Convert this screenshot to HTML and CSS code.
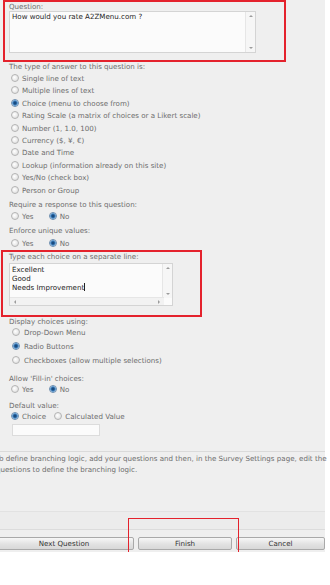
FILE: index.html
```html
<!DOCTYPE html>
<html lang="en">
<head>
  <meta charset="UTF-8" />
  <meta name="viewport" content="width=device-width, initial-scale=1.0">
  <title>New Question</title>
  <link rel="stylesheet" href="styles.css">
</head>
<body>

  <!-- Formulário da pergunta -->
  <div class="form-area">

    <div class="highlight question-box">
      <div class="label">Question:</div>
      <div class="textbox question-text">
        <div class="textbox-content">How would you rate A2ZMenu.com ?</div>
        <div class="vscroll">
          <span class="arrow up"></span>
          <span class="arrow down"></span>
        </div>
      </div>
    </div>

    <div class="label">The type of answer to this question is:</div>
    <div class="option-list type-list">
      <div class="option"><span class="radio"></span>Single line of text</div>
      <div class="option"><span class="radio"></span>Multiple lines of text</div>
      <div class="option"><span class="radio checked"></span>Choice (menu to choose from)</div>
      <div class="option"><span class="radio"></span>Rating Scale (a matrix of choices or a Likert scale)</div>
      <div class="option"><span class="radio"></span>Number (1, 1.0, 100)</div>
      <div class="option"><span class="radio"></span>Currency ($, ¥, €)</div>
      <div class="option"><span class="radio"></span>Date and Time</div>
      <div class="option"><span class="radio"></span>Lookup (information already on this site)</div>
      <div class="option"><span class="radio"></span>Yes/No (check box)</div>
      <div class="option"><span class="radio"></span>Person or Group</div>
    </div>

    <div class="label spaced-3">Require a response to this question:</div>
    <div class="inline-options spaced-1">
      <span class="radio"></span><span class="yes">Yes</span>
      <span class="radio checked"></span><span>No</span>
    </div>

    <div class="label spaced-3">Enforce unique values:</div>
    <div class="inline-options spaced-2">
      <span class="radio"></span><span class="yes">Yes</span>
      <span class="radio checked"></span><span>No</span>
    </div>

    <div class="highlight choices-box">
      <div class="label">Type each choice on a separate line:</div>
      <div class="textbox choices-text">
        <div class="textbox-content">
          Excellent<br>
          Good<br>
          Needs Improvement<span class="caret"></span>
        </div>
        <div class="vscroll">
          <span class="arrow up"></span>
          <span class="arrow down"></span>
        </div>
        <div class="hscroll">
          <span class="arrow left"></span>
          <span class="arrow right"></span>
        </div>
      </div>
    </div>

    <div class="label">Display choices using:</div>
    <div class="option-list display-list">
      <div class="option"><span class="radio"></span>Drop-Down Menu</div>
      <div class="option"><span class="radio checked"></span>Radio Buttons</div>
      <div class="option"><span class="radio"></span>Checkboxes (allow multiple selections)</div>
    </div>

    <div class="label spaced-6">Allow 'Fill-in' choices:</div>
    <div class="inline-options">
      <span class="radio"></span><span class="yes">Yes</span>
      <span class="radio checked"></span><span>No</span>
    </div>

    <div class="label spaced-5">Default value:</div>
    <div class="inline-options">
      <span class="radio checked"></span><span class="choice">Choice</span>
      <span class="radio"></span><span>Calculated Value</span>
    </div>
    <div class="default-input"></div>
  </div>

  <!-- Rodapé com os botões -->
  <div class="footer">
    <p class="branching">
      To define branching logic, add your questions and then, in the Survey Settings page, edit the<br>
      questions to define the branching logic.
    </p>
    <div class="footer-band"></div>
    <div class="buttons">
      <button class="btn btn-next">Next Question</button>
      <button class="btn btn-finish">Finish</button>
      <button class="btn btn-cancel">Cancel</button>
    </div>
    <div class="finish-mark"></div>
  </div>

</body>
</html>
```

FILE: styles.css
```css
body {
  margin: 0;
  background: #ffffff;
  font-family: 'DejaVu Sans', Verdana, sans-serif;
  font-size: 7.1px;
  color: #6d6d6d;
  overflow: hidden;
}

.form-area {
  width: 325px;
  background: #efefef;
  padding: 0 0 15px 0;
  border-bottom: 1px solid #dadada;
}

.label {
  line-height: 10px;
  height: 10px;
  padding-left: 9px;
  white-space: nowrap;
}

.spaced-1 { margin-top: 1px; }
.spaced-2 { margin-top: 2px; }
.spaced-3 { margin-top: 3px; }
.spaced-5 { margin-top: 5px; }
.spaced-6 { margin-top: 6px; }

/* Caixas vermelhas de destaque */
.highlight {
  border: 2px solid #e4222c;
  box-sizing: border-box;
}

.question-box {
  margin-left: 3px;
  width: 283px;
  height: 62px;
}

.question-box .label {
  padding-left: 4px;
  line-height: 9px;
  height: 9px;
}

.choices-box {
  margin-left: 1px;
  width: 201px;
  height: 67px;
}

.choices-box .label {
  padding-left: 6px;
}

/* Caixas de texto */
.textbox {
  position: relative;
  background: #fbfbfb;
  border: 1px solid #d4d4d4;
  box-sizing: border-box;
  color: #222222;
}

.textbox-content {
  padding: 2px 0 0 2px;
  line-height: 8.6px;
  white-space: nowrap;
}

.question-text {
  margin-left: 4px;
  width: 247px;
  height: 42px;
}

.question-text .textbox-content {
  padding-top: 0;
  line-height: 9px;
  color: #1e1e1e;
}

.choices-text {
  margin: 1px 0 0 6px;
  width: 164px;
  height: 43px;
}

.caret {
  display: inline-block;
  width: 1px;
  height: 8px;
  background: #222222;
  vertical-align: -1px;
}

.vscroll {
  position: absolute;
  top: 0;
  right: 0;
  width: 9px;
  height: 100%;
  background: #f6f6f6;
  border-left: 1px solid #e6e6e6;
}

.choices-text .vscroll {
  height: 34px;
}

.hscroll {
  position: absolute;
  left: 0;
  bottom: 0;
  width: 154px;
  height: 7px;
  background: #f2f2f2;
  border-top: 1px solid #e6e6e6;
}

.arrow {
  position: absolute;
  width: 0;
  height: 0;
  border: 2px solid transparent;
}

.arrow.up { top: 3px; left: 3px; border-bottom-color: #9c9c9c; border-top-width: 0; }
.arrow.down { bottom: 3px; left: 3px; border-top-color: #9c9c9c; border-bottom-width: 0; }
.arrow.left { left: 4px; top: 2px; border-right-color: #9c9c9c; border-left-width: 0; }
.arrow.right { right: 4px; top: 2px; border-left-color: #9c9c9c; border-right-width: 0; }

/* Botões de rádio */
.radio {
  display: inline-block;
  width: 6px;
  height: 6px;
  border: 1px solid #b4b4b4;
  border-radius: 50%;
  background: radial-gradient(circle at 40% 40%, #ffffff, #d9d9d9);
  vertical-align: middle;
  margin-right: 3px;
  position: relative;
  top: -1px;
}

.radio.checked {
  border-color: #6b8cae;
  background: radial-gradient(circle, #123a66 0, #1f5a96 1.4px, #6aa6dc 2.6px, #e4eef7 3.2px);
}

.option-list {
  padding-left: 11px;
}

.option {
  white-space: nowrap;
}

.type-list {
  margin-top: 1px;
}

.type-list .option {
  height: 12.4px;
  line-height: 12.4px;
}

.display-list {
  padding-left: 12px;
  margin-top: -1px;
}

.display-list .option {
  height: 14px;
  line-height: 14px;
}

.display-list .radio {
  margin-right: 4px;
}

.inline-options {
  padding-left: 11px;
  height: 12px;
  line-height: 12px;
  white-space: nowrap;
}

.inline-options .yes {
  margin-right: 13px;
}

.inline-options .choice {
  margin-right: 6px;
}

.default-input {
  margin: 1px 0 0 12px;
  width: 88px;
  height: 12px;
  background: #fbfbfb;
  border: 1px solid #dcdcdc;
  box-sizing: border-box;
}

/* Rodapé */
.footer {
  position: relative;
  width: 325px;
  background: #efefef;
  padding-bottom: 2px;
}

.branching {
  margin: 0 0 0 -4px;
  padding-top: 1px;
  line-height: 11px;
  height: 58px;
  white-space: nowrap;
  color: #6d6d6d;
}

.footer-band {
  height: 17px;
  border-top: 1px solid #e2e2e2;
  border-bottom: 1px solid #dcdcdc;
  background: #ececec;
}

.buttons {
  display: flex;
  gap: 4px;
  padding-top: 7px;
  margin-left: -6px;
}

.btn {
  height: 13px;
  padding: 0;
  border: 1px solid #a9a9a9;
  border-radius: 2px;
  background: linear-gradient(to bottom, #f7f7f7, #e2e2e2 55%, #d8d8d8);
  font-family: 'DejaVu Sans', Verdana, sans-serif;
  font-size: 7.1px;
  color: #333333;
  cursor: pointer;
}

.btn-next { width: 140px; }
.btn-finish { width: 94px; }
.btn-cancel { width: 89px; }

/* Marcação vermelha sobre o botão Finish */
.finish-mark {
  position: absolute;
  left: 128px;
  top: 66px;
  width: 111px;
  height: 53px;
  border: 1.5px solid #e4222c;
  box-sizing: border-box;
}
```
